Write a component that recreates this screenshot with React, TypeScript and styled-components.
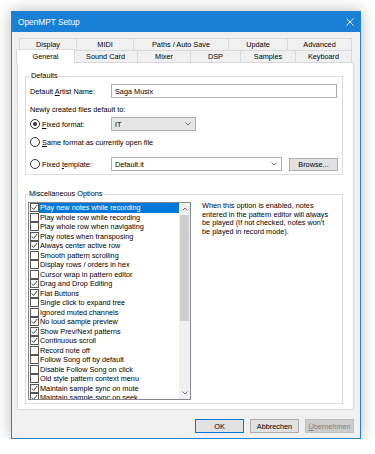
import React from "react";
import styled, { createGlobalStyle } from "styled-components";

const FONT = `"Liberation Sans", Arial, sans-serif`;

const GlobalStyle = createGlobalStyle`
  html, body { margin: 0; padding: 0; background: #ffffff; }
  * { box-sizing: border-box; }
`;

const Window = styled.div`
  margin: 11px 0 0 11px;
  width: 350px;
  height: 428px;
  border: 1px solid #1d84d6;
  background: #f0f0f0;
  box-shadow: 0 0 14px rgba(0, 0, 0, 0.28);
  display: flex;
  flex-direction: column;
  font-family: ${FONT};
  font-size: 7.3px;
  color: #000;
`;

const TitleBar = styled.div`
  height: 20px;
  background: #1a80d5;
  display: flex;
  align-items: center;
  justify-content: space-between;
  padding: 0 6px;
  color: #fff;
`;

const Title = styled.span`
  font-size: 8.3px;
`;

const Client = styled.div`
  flex: 1;
  display: flex;
  flex-direction: column;
  padding: 6px 6px 5px 5px;
`;

const TabStrip = styled.div`
  margin-left: 2px;
  width: 333px;
  display: flex;
  flex-direction: column;
`;

const TabRow = styled.div`
  display: flex;
  align-items: flex-start;
  height: 12px;
`;

const Tab = styled.div<{ $w: number; $active?: boolean }>`
  width: ${(p) => (p.$active ? p.$w + 5 : p.$w)}px;
  height: ${(p) => (p.$active ? 14 : 12)}px;
  margin: ${(p) => (p.$active ? "-1px -2px -1px -3px" : "0")};
  position: relative;
  z-index: ${(p) => (p.$active ? 2 : 1)};
  background: ${(p) => (p.$active ? "#ffffff" : "#f0f0f0")};
  border: 1px solid #d9d9d9;
  border-bottom: none;
  border-right: ${(p) => (p.$active ? "1px solid #d9d9d9" : "none")};
  display: flex;
  align-items: center;
  justify-content: center;
  white-space: nowrap;
  &:last-child {
    border-right: 1px solid #d9d9d9;
  }
`;

const Panel = styled.div`
  width: 337px;
  height: 348px;
  background: #ffffff;
  border: 1px solid #d9d9d9;
  display: flex;
  flex-direction: column;
`;

const Group = styled.fieldset<{ $mt: number; $pl: number }>`
  margin: ${(p) => p.$mt}px 0 0 7px;
  width: 318px;
  min-width: 0;
  border: 1px solid #dcdcdc;
  padding: 0 5px 3px ${(p) => p.$pl}px;
`;

const Legend = styled.legend`
  padding: 0 1px;
  line-height: 12px;
  height: 12px;
`;

const Row = styled.div<{ $h: number; $mt: number }>`
  display: flex;
  align-items: center;
  height: ${(p) => p.$h}px;
  margin-top: ${(p) => p.$mt}px;
  white-space: nowrap;
`;

const LabelCell = styled.div<{ $free?: boolean }>`
  width: ${(p) => (p.$free ? "auto" : "81px")};
  flex: none;
  display: flex;
  align-items: center;
  gap: 2px;
`;

const U = styled.span`
  text-decoration: underline;
`;

const TextField = styled.div<{ $w: number }>`
  width: ${(p) => p.$w}px;
  height: 14px;
  border: 1px solid #abadb3;
  background: #fff;
  display: flex;
  align-items: center;
  padding-left: 3px;
`;

const Combo = styled.div<{ $w: number; $flat?: boolean }>`
  width: ${(p) => p.$w}px;
  height: 14px;
  flex: none;
  border: 1px solid ${(p) => (p.$flat ? "#adadad" : "#abadb3")};
  background: ${(p) => (p.$flat ? "#e5e5e5" : "#ffffff")};
  display: flex;
  align-items: center;
  justify-content: space-between;
  padding: 0 4px 0 3px;
`;

const Radio = styled.span<{ $on?: boolean }>`
  width: 10px;
  height: 10px;
  flex: none;
  border-radius: 50%;
  border: 1px solid #333;
  background: #fff;
  display: inline-flex;
  align-items: center;
  justify-content: center;
  &::after {
    content: "";
    width: 4px;
    height: 4px;
    border-radius: 50%;
    background: ${(p) => (p.$on ? "#333" : "transparent")};
  }
`;

const Button = styled.div<{ $variant?: "default" | "disabled" }>`
  width: 49px;
  height: 14px;
  flex: none;
  display: flex;
  align-items: center;
  justify-content: center;
  background: ${(p) => (p.$variant === "disabled" ? "#cccccc" : "#e1e1e1")};
  border: 1px solid
    ${(p) =>
      p.$variant === "default" ? "#0078d7" : p.$variant === "disabled" ? "#bfbfbf" : "#adadad"};
  color: ${(p) => (p.$variant === "disabled" ? "#838383" : "#000")};
`;

const BrowseButton = styled(Button)`
  margin-left: 7px;
  height: 13px;
`;

const MiscBody = styled.div`
  display: flex;
  align-items: flex-start;
  margin-top: 2px;
`;

const ListBox = styled.div`
  width: 163px;
  height: 198px;
  flex: none;
  border: 1px solid #828790;
  background: #fff;
  display: flex;
  overflow: hidden;
`;

const Items = styled.div`
  flex: 1;
  display: flex;
  flex-direction: column;
  overflow: hidden;
  padding-left: 1px;
`;

const Item = styled.div`
  height: 9.5px;
  flex: none;
  display: flex;
  align-items: center;
  white-space: nowrap;
`;

const ItemText = styled.span<{ $sel?: boolean }>`
  flex: 1;
  height: 9.5px;
  line-height: 9.5px;
  padding-left: 1px;
  background: ${(p) => (p.$sel ? "#0078d7" : "transparent")};
  color: ${(p) => (p.$sel ? "#fff" : "#000")};
`;

const Box = styled.span`
  width: 9px;
  height: 9px;
  flex: none;
  border: 1px solid #555;
  background: #fff;
  display: flex;
  align-items: center;
  justify-content: center;
`;

const ScrollBar = styled.div`
  width: 11px;
  flex: none;
  background: #f0f0f0;
  display: flex;
  flex-direction: column;
`;

const ScrollArrow = styled.div`
  height: 12px;
  display: flex;
  align-items: center;
  justify-content: center;
`;

const Track = styled.div`
  flex: 1;
  display: flex;
  flex-direction: column;
`;

const Thumb = styled.div`
  height: 106px;
  margin: 0 1px;
  background: #cdcdcd;
`;

const Description = styled.div`
  margin-left: 11px;
  width: 129px;
  line-height: 8.7px;
`;

const ButtonBar = styled.div`
  display: flex;
  justify-content: flex-end;
  gap: 6px;
  margin-top: 9px;
`;

const Chevron = ({ up }: { up?: boolean }) => (
  <svg width="6" height="4" viewBox="0 0 6 4">
    <polyline
      points={up ? "0.5,3.5 3,1 5.5,3.5" : "0.5,0.5 3,3 5.5,0.5"}
      fill="none"
      stroke="#606060"
      strokeWidth="0.9"
    />
  </svg>
);

const Check = () => (
  <svg width="7" height="7" viewBox="0 0 7 7">
    <polyline points="0.8,3.4 2.6,5.4 6.2,1" fill="none" stroke="#333" strokeWidth="0.9" />
  </svg>
);

const topTabs = [
  { label: "Display", w: 57 },
  { label: "MIDI", w: 57 },
  { label: "Paths / Auto Save", w: 95 },
  { label: "Update", w: 59 },
  { label: "Advanced", w: 65 },
];

const bottomTabs = [
  { label: "General", w: 54, active: true },
  { label: "Sound Card", w: 64 },
  { label: "Mixer", w: 53 },
  { label: "DSP", w: 50 },
  { label: "Samples", w: 55 },
  { label: "Keyboard", w: 57 },
];

const options: [string, boolean][] = [
  ["Play new notes while recording", true],
  ["Play whole row while recording", false],
  ["Play whole row when navigating", false],
  ["Play notes when transposing", true],
  ["Always center active row", true],
  ["Smooth pattern scrolling", false],
  ["Display rows / orders in hex", false],
  ["Cursor wrap in pattern editor", false],
  ["Drag and Drop Editing", true],
  ["Flat Buttons", true],
  ["Single click to expand tree", false],
  ["Ignored muted channels", false],
  ["No loud sample preview", true],
  ["Show Prev/Next patterns", true],
  ["Continuous scroll", true],
  ["Record note off", false],
  ["Follow Song off by default", false],
  ["Disable Follow Song on click", false],
  ["Old style pattern context menu", false],
  ["Maintain sample sync on mute", true],
  ["Maintain sample sync on seek", true],
];

export default function App() {
  return (
    <>
      <GlobalStyle />
      <Window>
        <TitleBar>
          <Title>OpenMPT Setup</Title>
          <svg width="8" height="8" viewBox="0 0 8 8">
            <path d="M0.5 0.5 L7.5 7.5 M7.5 0.5 L0.5 7.5" stroke="#fff" strokeWidth="0.9" />
          </svg>
        </TitleBar>
        <Client>
          <TabStrip>
            <TabRow>
              {topTabs.map((t) => (
                <Tab key={t.label} $w={t.w}>
                  {t.label}
                </Tab>
              ))}
            </TabRow>
            <TabRow>
              {bottomTabs.map((t) => (
                <Tab key={t.label} $w={t.w} $active={t.active}>
                  {t.label}
                </Tab>
              ))}
            </TabRow>
          </TabStrip>
          <Panel>
            <Group $mt={7} $pl={4}>
              <Legend>Defaults</Legend>
              <Row $h={14} $mt={2}>
                <LabelCell>
                  <span>
                    Default <U>A</U>rtist Name:
                  </span>
                </LabelCell>
                <TextField $w={226}>Saga Musix</TextField>
              </Row>
              <Row $h={12} $mt={5}>
                Newly created files default to:
              </Row>
              <Row $h={14} $mt={2}>
                <LabelCell>
                  <Radio $on />
                  <span>
                    <U>F</U>ixed format:
                  </span>
                </LabelCell>
                <Combo $w={85} $flat>
                  <span>IT</span>
                  <Chevron />
                </Combo>
              </Row>
              <Row $h={14} $mt={4}>
                <LabelCell $free>
                  <Radio />
                  <span>
                    <U>S</U>ame format as currently open file
                  </span>
                </LabelCell>
              </Row>
              <Row $h={14} $mt={8}>
                <LabelCell>
                  <Radio />
                  <span>
                    Fixed <U>t</U>emplate:
                  </span>
                </LabelCell>
                <Combo $w={171}>
                  <span>Default.it</span>
                  <Chevron />
                </Combo>
                <BrowseButton>Browse...</BrowseButton>
              </Row>
            </Group>
            <Group $mt={13} $pl={2}>
              <Legend>Miscellaneous Options</Legend>
              <MiscBody>
                <ListBox>
                  <Items>
                    {options.map(([label, on], i) => (
                      <Item key={label}>
                        <Box>{on && <Check />}</Box>
                        <ItemText $sel={i === 0}>{label}</ItemText>
                      </Item>
                    ))}
                  </Items>
                  <ScrollBar>
                    <ScrollArrow>
                      <Chevron up />
                    </ScrollArrow>
                    <Track>
                      <Thumb />
                    </Track>
                    <ScrollArrow>
                      <Chevron />
                    </ScrollArrow>
                  </ScrollBar>
                </ListBox>
                <Description>
                  When this option is enabled, notes entered in the pattern editor will always be
                  played (If not checked, notes won't be played in record mode).
                </Description>
              </MiscBody>
            </Group>
          </Panel>
          <ButtonBar>
            <Button $variant="default">OK</Button>
            <Button>Abbrechen</Button>
            <Button $variant="disabled">
              <U>Ü</U>bernehmen
            </Button>
          </ButtonBar>
        </Client>
      </Window>
    </>
  );
}
